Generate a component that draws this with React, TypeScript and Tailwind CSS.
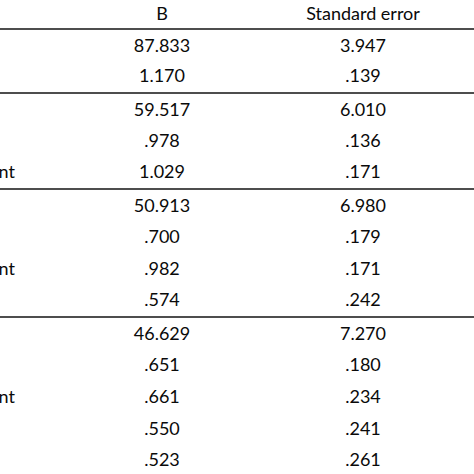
import React from 'react';

type Row = { label: string; b: string; se: string };

// regression blocks, each one separated by a rule
const blocks: Row[][] = [
  [
    { label: '(Constant)', b: '87.833', se: '3.947' },
    { label: 'Pre-test', b: '1.170', se: '.139' },
  ],
  [
    { label: '(Constant)', b: '59.517', se: '6.010' },
    { label: 'Pre-test', b: '.978', se: '.136' },
    { label: 'Achievement', b: '1.029', se: '.171' },
  ],
  [
    { label: '(Constant)', b: '50.913', se: '6.980' },
    { label: 'Pre-test', b: '.700', se: '.179' },
    { label: 'Achievement', b: '.982', se: '.171' },
    { label: 'Gender', b: '.574', se: '.242' },
  ],
  [
    { label: '(Constant)', b: '46.629', se: '7.270' },
    { label: 'Pre-test', b: '.651', se: '.180' },
    { label: 'Achievement', b: '.661', se: '.234' },
    { label: 'Gender', b: '.550', se: '.241' },
    { label: 'Investment', b: '.523', se: '.261' },
  ],
];

const cols = 'grid grid-cols-[150px_201px_201px_1fr]';

const App: React.FC = () => {
  return (
    <div className="w-[474px] h-[474px] overflow-hidden bg-white text-[#0a0a0a] font-['Lato','Liberation_Sans',sans-serif] text-[18px]">
      <div className="w-[700px] ml-[-88.5px]">
        {/* header */}
        <div className={`${cols} h-[28px] items-center pb-[2px]`}>
          <div />
          <div className="text-center">B</div>
          <div className="text-center">Standard error</div>
          <div />
        </div>

        {blocks.map((block, bi) => (
          <div key={bi} className="border-t-2 border-[#4d4d4d]">
            {block.map((row, ri) => (
              <div
                key={ri}
                className={`${cols} items-center ${ri === 0 ? 'h-[30px]' : 'h-8'} ${
                  ri === block.length - 1 ? 'pb-[2px]' : ''
                }`}
              >
                <div className="whitespace-nowrap">{row.label}</div>
                <div className="text-center">{row.b}</div>
                <div className="text-center">{row.se}</div>
                <div />
              </div>
            ))}
          </div>
        ))}
      </div>
    </div>
  );
};

export default App;
